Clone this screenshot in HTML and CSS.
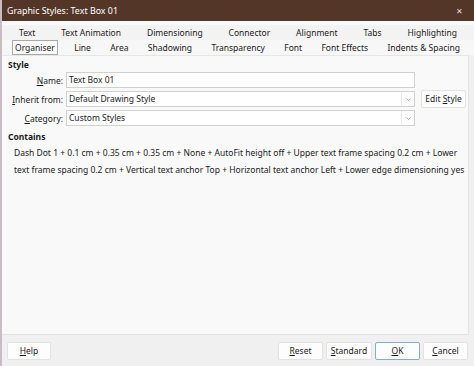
FILE: index.html
```html
<!DOCTYPE html>
<html>
<head>
<meta charset="utf-8">
<link rel="stylesheet" href="styles.css">
</head>
<body>
<div class="window">
  <div class="titlebar">
    <span class="title">Graphic Styles: Text Box 01</span>
    <span class="close">✕</span>
  </div>
  <div class="tabs">
    <div class="tabrow row1">
      <span class="tab">Text</span>
      <span class="tab">Text Animation</span>
      <span class="tab">Dimensioning</span>
      <span class="tab">Connector</span>
      <span class="tab">Alignment</span>
      <span class="tab">Tabs</span>
      <span class="tab">Highlighting</span>
    </div>
    <div class="tabrow row2">
      <span class="tab active">Organiser</span>
      <span class="tab">Line</span>
      <span class="tab">Area</span>
      <span class="tab">Shadowing</span>
      <span class="tab">Transparency</span>
      <span class="tab">Font</span>
      <span class="tab">Font Effects</span>
      <span class="tab">Indents &amp; Spacing</span>
    </div>
  </div>
  <div class="panel">
    <div class="heading">Style</div>
    <div class="form">
      <label class="lbl"><u>N</u>ame:</label>
      <div class="field">Text Box 01</div>
      <div></div>
      <label class="lbl"><u>I</u>nherit from:</label>
      <div class="field combo">Default Drawing Style<span class="arrow"><svg width="5" height="3" viewBox="0 0 5 3"><path d="M0.5 0.5 L2.5 2.5 L4.5 0.5" fill="none" stroke="#9a9a9a" stroke-width="0.8"/></svg></span></div>
      <button class="btn edit">Edit <u>S</u>tyle</button>
      <label class="lbl"><u>C</u>ategory:</label>
      <div class="field combo">Custom Styles<span class="arrow"><svg width="5" height="3" viewBox="0 0 5 3"><path d="M0.5 0.5 L2.5 2.5 L4.5 0.5" fill="none" stroke="#9a9a9a" stroke-width="0.8"/></svg></span></div>
      <div></div>
    </div>
    <div class="heading contains">Contains</div>
    <p class="desc">Dash Dot 1 + 0.1 cm + 0.35 cm + 0.35 cm + None + AutoFit height off + Upper text frame spacing 0.2 cm + Lower text frame spacing 0.2 cm + Vertical text anchor Top + Horizontal text anchor Left + Lower edge dimensioning yes</p>
  </div>
  <div class="footer">
    <button class="btn help"><u>H</u>elp</button>
    <div class="spacer"></div>
    <button class="btn"><u>R</u>eset</button>
    <button class="btn std"><u>S</u>tandard</button>
    <button class="btn ok"><u>O</u>K</button>
    <button class="btn"><u>C</u>ancel</button>
  </div>
</div>
</body>
</html>
```
FILE: styles.css
```css
html, body {
  margin: 0;
  padding: 0;
}
body {
  width: 474px;
  height: 366px;
  overflow: hidden;
  background: #f0f0f0;
  font-family: "Noto Sans", "Open Sans", sans-serif;
  font-size: 8.5px;
  color: #1a1a1a;
}
.window {
  display: flex;
  flex-direction: column;
  height: 366px;
  border-left: 2px solid #c9bcc6;
  box-sizing: border-box;
}
.titlebar {
  height: 21px;
  background: #533627;
  color: #fff;
  display: flex;
  align-items: center;
  justify-content: space-between;
  padding: 0 11px 0 5px;
  flex: none;
}
.title {
  font-size: 8.9px;
}
.close {
  font-size: 8px;
  color: #e8dcd6;
}
.tabs {
  background: #f9f9f9;
  padding-top: 4px;
  flex: none;
}
.tabrow {
  display: flex;
  justify-content: space-between;
  height: 15px;
  align-items: center;
  white-space: nowrap;
}
.row1 {
  padding: 0 14px 0 14px;
  background: #f3f3f3;
}
.row2 {
  padding: 0 11px 0 10px;
  background: #f7f7f7;
}
.tab {
  padding: 0 2px;
  border: 1px solid transparent;
  line-height: 13px;
}
.tab.active {
  border-color: #a8a8a8;
  background: #fcfcfc;
}
.panel {
  flex: 1;
  background: #f9f9f9;
  border-top: 1px solid #e6e6e6;
  border-bottom: 1px solid #e3e3e3;
  border-right: 1px solid #e3e3e3;
  margin-right: 5px;
  padding: 1px 0 0 6px;
}
.heading {
  font-weight: bold;
  height: 15px;
  line-height: 15px;
}
.form {
  display: grid;
  grid-template-columns: 55px 349px 45px;
  column-gap: 3px;
  row-gap: 3px;
  align-items: center;
}
.lbl {
  text-align: right;
  white-space: nowrap;
}
.field {
  height: 14px;
  line-height: 14px;
  background: #fff;
  border: 1px solid #d1d1d1;
  padding-left: 2px;
  position: relative;
  white-space: nowrap;
}
.arrow {
  position: absolute;
  right: 0;
  top: 0;
  width: 12px;
  height: 14px;
  border-left: 1px solid #ececec;
  display: flex;
  align-items: center;
  justify-content: center;
}
.btn {
  font-family: inherit;
  font-size: 8.5px;
  color: #1a1a1a;
  background: #fdfdfd;
  border: 1px solid #e2e2e2;
  border-radius: 2px;
  height: 18px;
  padding: 0;
  line-height: 16px;
  white-space: nowrap;
}
.edit {
  width: 45px;
  margin: -1px 0 -1px 3px;
}
.contains {
  margin-top: 3px;
}
.desc {
  margin: 0 0 0 6px;
  line-height: 17px;
}
.footer {
  height: 31px;
  flex: none;
  display: flex;
  align-items: center;
  padding: 0 6px 0 5px;
  gap: 3px;
}
.footer .btn {
  width: 45px;
  height: 18px;
}
.footer .help {
  width: 44px;
}
.footer .std {
  width: 46px;
}
.spacer {
  flex: 1;
}
.footer .ok {
  border-color: #86aad6;
}
u {
  text-decoration-thickness: 1px;
  text-underline-offset: 1px;
}
```
